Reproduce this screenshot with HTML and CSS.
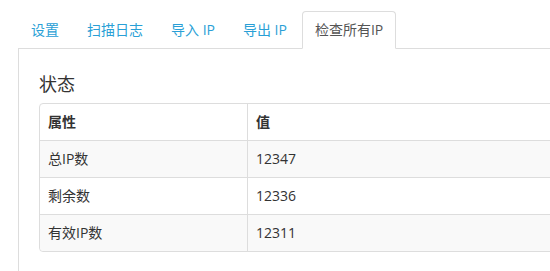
FILE: index.html
```html
<!DOCTYPE html>
<html>
<head>
<meta charset="utf-8">
<link rel="stylesheet" href="styles.css">
</head>
<body>
<div class="page">
  <ul class="tabs">
    <li><a class="tab">设置</a></li>
    <li><a class="tab">扫描日志</a></li>
    <li><a class="tab">导入 IP</a></li>
    <li><a class="tab">导出 IP</a></li>
    <li><a class="tab active">检查所有IP</a></li>
  </ul>
  <div class="panel">
    <h3 class="title">状态</h3>
    <table class="grid">
      <thead>
        <tr><th class="c1">属性</th><th>值</th></tr>
      </thead>
      <tbody>
        <tr class="odd"><td class="c1">总IP数</td><td>12347</td></tr>
        <tr><td class="c1">剩余数</td><td>12336</td></tr>
        <tr class="odd"><td class="c1">有效IP数</td><td>12311</td></tr>
      </tbody>
    </table>
  </div>
</div>
</body>
</html>
```

FILE: styles.css
```css
html, body {
  margin: 0;
  padding: 0;
  overflow: hidden;
  background: #fff;
}
body {
  font-family: "Open Sans", "Noto Sans CJK SC", sans-serif;
  font-size: 14px;
  line-height: 20px;
  color: #333;
}
.page {
  width: 900px;
  padding: 11px 0 0 18px;
}
.tabs {
  list-style: none;
  margin: 0;
  padding: 0;
  display: flex;
  border-bottom: 1px solid #ddd;
}
.tabs li {
  margin-right: 2px;
  margin-bottom: -1px;
}
.tab {
  display: block;
  padding: 8px 12px;
  border: 1px solid transparent;
  border-radius: 4px 4px 0 0;
  color: #2a9fd6;
  text-decoration: none;
}
.tab.active {
  color: #555;
  background: #fff;
  border-color: #ddd;
  border-bottom-color: transparent;
}
.panel {
  border: 1px solid #ddd;
  border-top: none;
  padding: 20px;
  height: 220px;
}
.title {
  margin: 0 0 4px 0;
  font-size: 18px;
  line-height: 30px;
  font-weight: 400;
  color: #333;
}
.grid {
  width: 700px;
  border-collapse: separate;
  border-spacing: 0;
  border: 1px solid #ddd;
  border-radius: 4px;
}
.grid th, .grid td {
  padding: 8px;
  text-align: left;
  vertical-align: top;
  border-top: 1px solid #ddd;
  border-left: 1px solid #ddd;
}
.grid thead th {
  border-top: none;
  font-weight: bold;
}
.grid .c1 {
  border-left: none;
  width: 191px;
}
.grid tr.odd td {
  background: #f9f9f9;
}
.grid tbody tr:last-child td:first-child {
  border-bottom-left-radius: 4px;
}
```
